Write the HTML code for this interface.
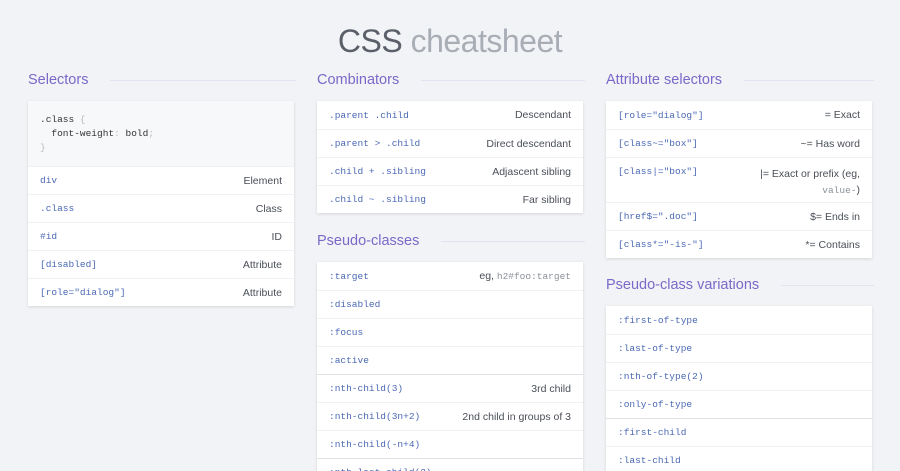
<!DOCTYPE html>
<html><head><meta charset="utf-8"><style>
*{box-sizing:border-box;margin:0;padding:0}
html,body{width:900px;height:471px;overflow:hidden}
body{background:#f2f3f6;font-family:"Liberation Sans",sans-serif;position:relative}
h1{position:absolute;top:23px;left:0;width:900px;text-align:center;font-weight:300;font-size:32px;color:#5a5f6a;letter-spacing:-0.5px}
h1 span{color:#a8adb6}
.col{position:absolute;top:0;width:266px}
h2{position:absolute;font-weight:normal;font-size:14.5px;color:#7b68c8;display:flex;align-items:center;width:266px;height:20px}
h2:after{content:"";flex:1;height:1px;background:#e2e3ee;margin-left:22px;margin-right:-2px}
.card{position:absolute;width:266px;background:#fff;box-shadow:0 1px 3px rgba(0,0,0,.12)}
.row{display:flex;justify-content:space-between;align-items:center;height:28px;padding:0 12px;border-top:1px solid #f0f1f4;font-size:10.5px;color:#4a4f58}
.row:first-child{border-top:none}
.row.g{border-top:1px solid #dfe1e6}
code,.m{font-family:"Liberation Mono",monospace;font-size:9.5px;color:#4a68b4}
.r{text-align:right}
.gray{color:#8a8f99}
pre{background:#f7f8fa;height:65px;padding:12px 12px;font-family:"Liberation Mono",monospace;font-size:9.5px;line-height:14px;color:#333}
pre i{font-style:normal;color:#bbb}
</style></head><body>
<h1>CSS <span>cheatsheet</span></h1>

<div class="col" style="left:28px">
<h2 style="top:70px">Selectors</h2>
<div class="card" style="top:101px">
<pre>.class <i>{</i>
  font-weight<i>:</i> bold<i>;</i>
<i>}</i></pre>
<div class="row"><code>div</code><span>Element</span></div>
<div class="row"><code>.class</code><span>Class</span></div>
<div class="row"><code>#id</code><span>ID</span></div>
<div class="row"><code>[disabled]</code><span>Attribute</span></div>
<div class="row"><code>[role="dialog"]</code><span>Attribute</span></div>
</div>
</div>

<div class="col" style="left:317px">
<h2 style="top:70px">Combinators</h2>
<div class="card" style="top:101px">
<div class="row"><code>.parent .child</code><span>Descendant</span></div>
<div class="row"><code>.parent &gt; .child</code><span>Direct descendant</span></div>
<div class="row"><code>.child + .sibling</code><span>Adjascent sibling</span></div>
<div class="row"><code>.child ~ .sibling</code><span>Far sibling</span></div>
</div>
<h2 style="top:231px">Pseudo-classes</h2>
<div class="card" style="top:262px">
<div class="row"><code>:target</code><span>eg, <span class="m gray">h2#foo:target</span></span></div>
<div class="row"><code>:disabled</code></div>
<div class="row"><code>:focus</code></div>
<div class="row"><code>:active</code></div>
<div class="row g"><code>:nth-child(3)</code><span>3rd child</span></div>
<div class="row"><code>:nth-child(3n+2)</code><span>2nd child in groups of 3</span></div>
<div class="row"><code>:nth-child(-n+4)</code></div>
<div class="row g"><code>:nth-last-child(2)</code></div>
</div>
</div>

<div class="col" style="left:606px">
<h2 style="top:70px">Attribute selectors</h2>
<div class="card" style="top:101px">
<div class="row"><code>[role="dialog"]</code><span>= Exact</span></div>
<div class="row"><code>[class~="box"]</code><span>~= Has word</span></div>
<div class="row" style="height:45px;align-items:flex-start;padding-top:8px"><code>[class|="box"]</code><span class="r" style="line-height:16px">|= Exact or prefix (eg,<br><span class="m gray">value-</span>)</span></div>
<div class="row"><code>[href$=".doc"]</code><span>$= Ends in</span></div>
<div class="row"><code>[class*="-is-"]</code><span>*= Contains</span></div>
</div>
<h2 style="top:275px">Pseudo-class variations</h2>
<div class="card" style="top:306px">
<div class="row"><code>:first-of-type</code></div>
<div class="row"><code>:last-of-type</code></div>
<div class="row"><code>:nth-of-type(2)</code></div>
<div class="row"><code>:only-of-type</code></div>
<div class="row g"><code>:first-child</code></div>
<div class="row"><code>:last-child</code></div>
</div>
</div>
</body></html>
